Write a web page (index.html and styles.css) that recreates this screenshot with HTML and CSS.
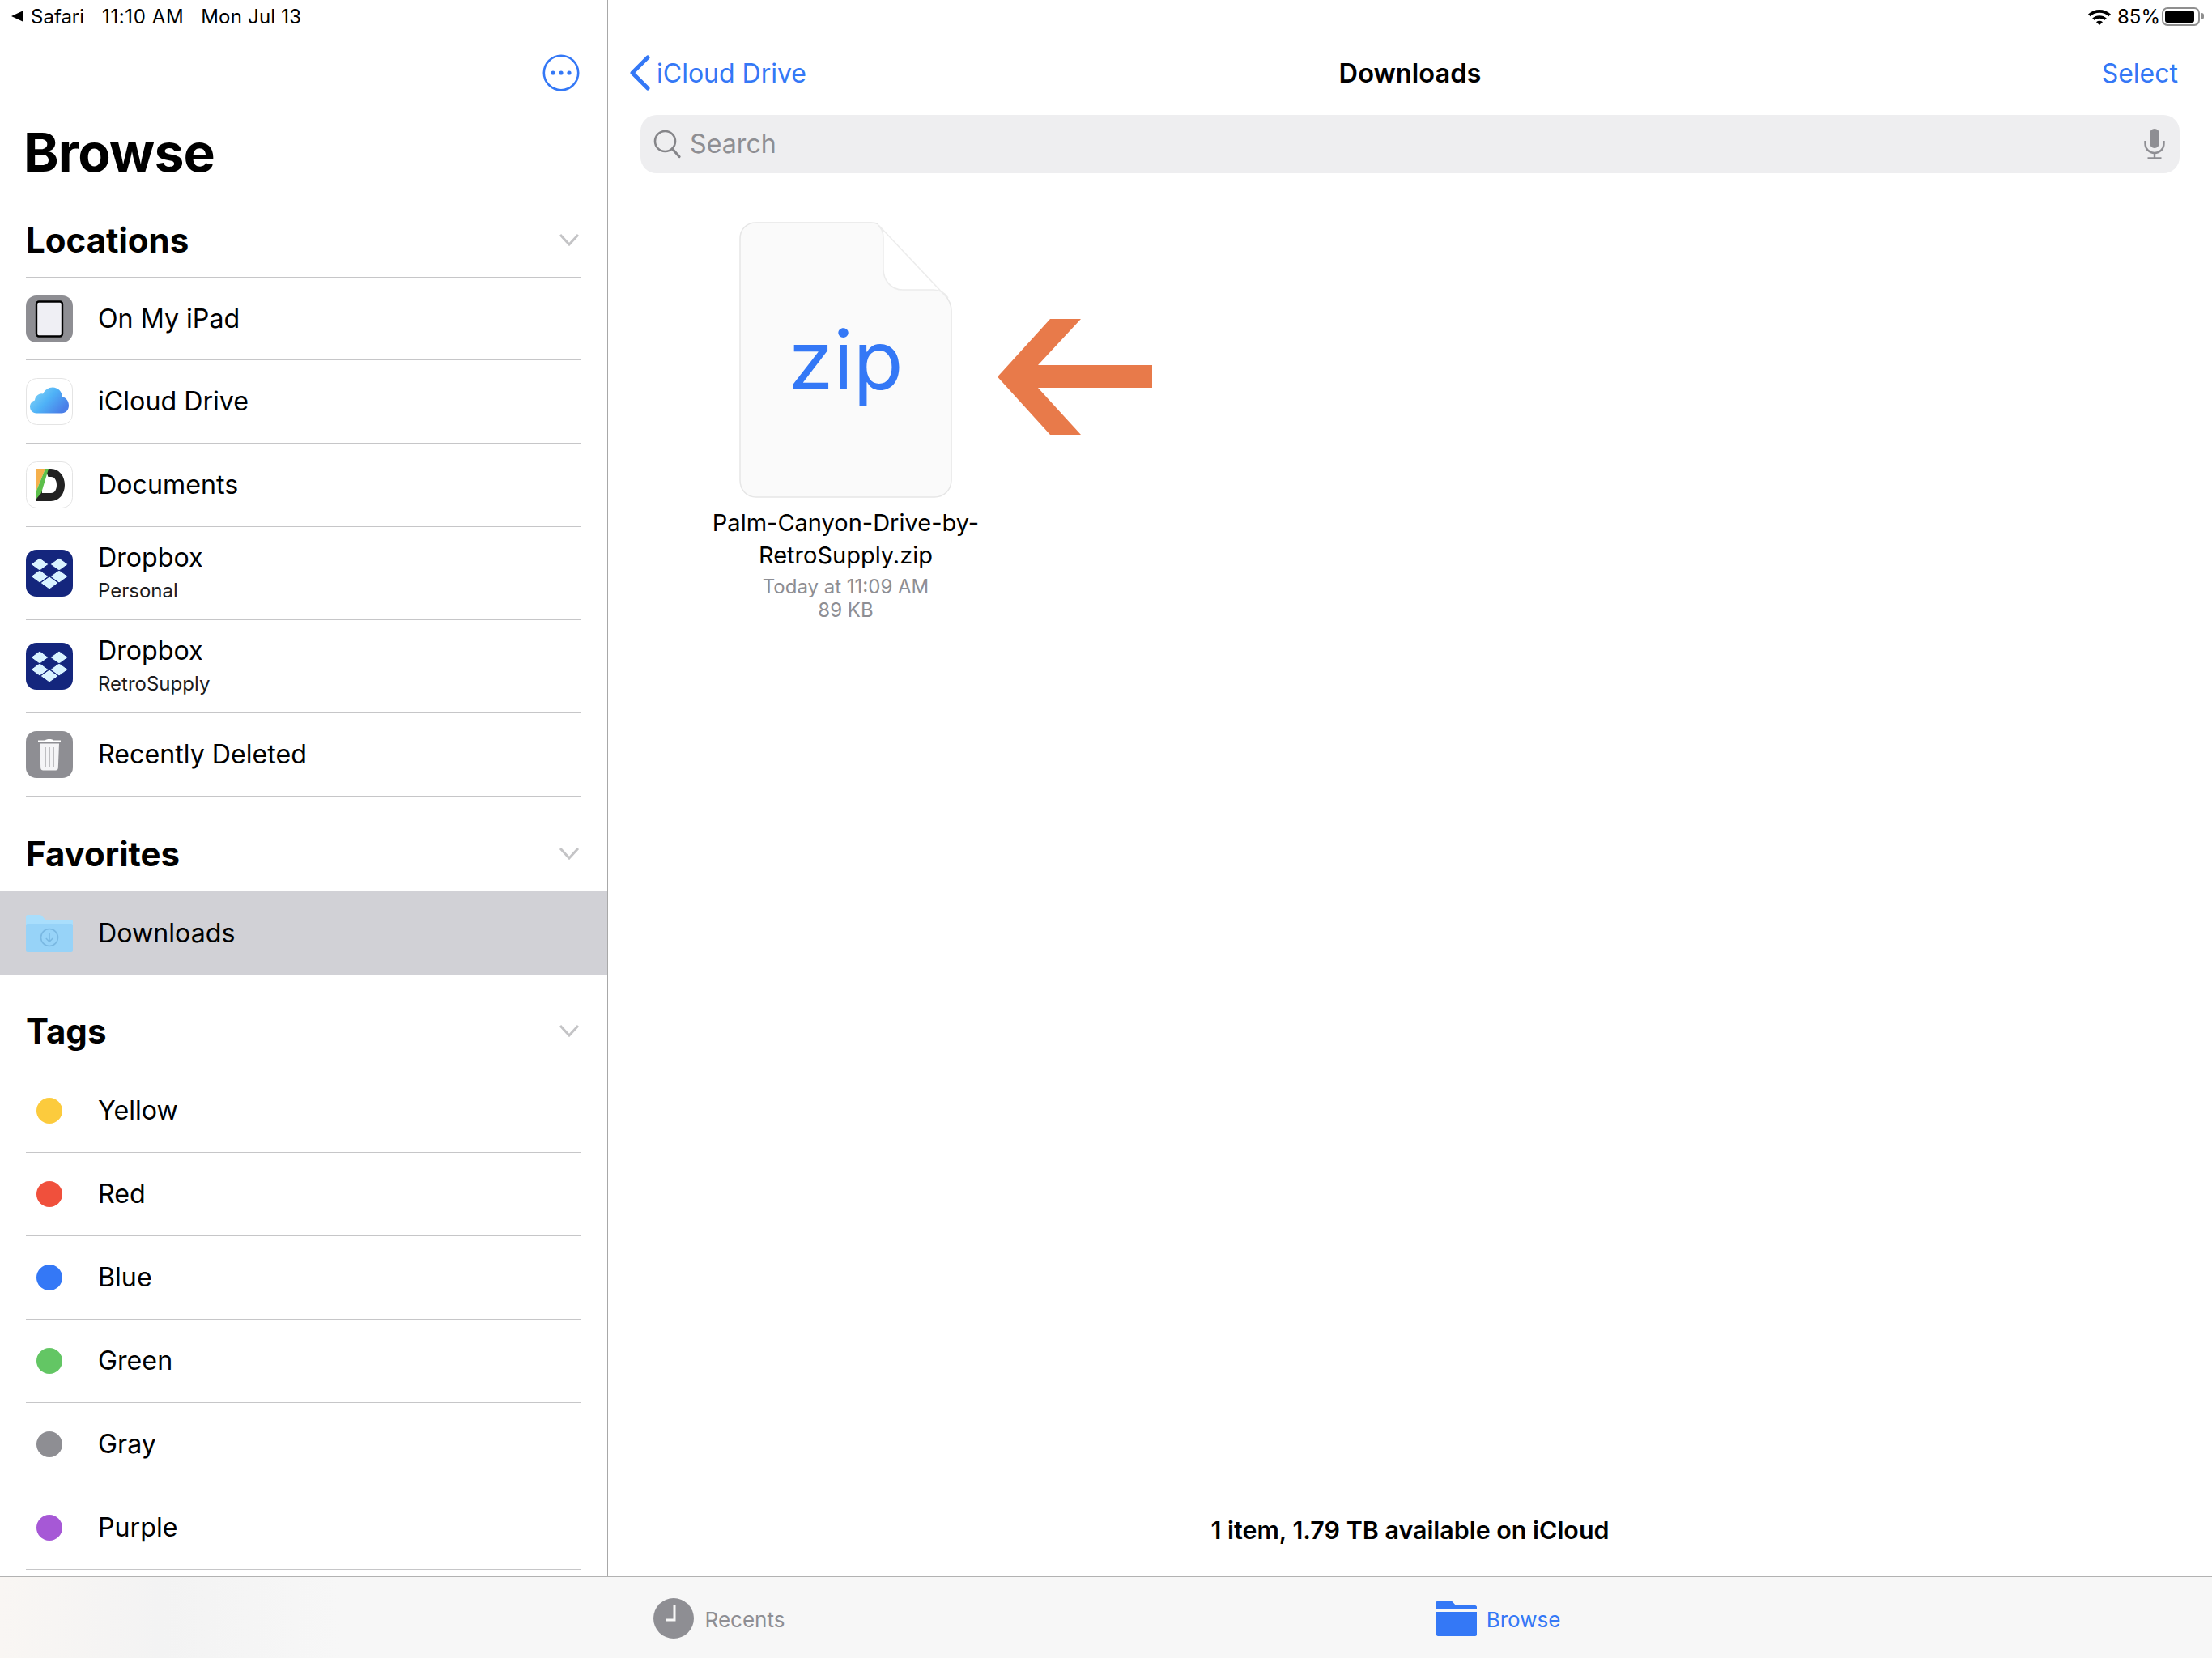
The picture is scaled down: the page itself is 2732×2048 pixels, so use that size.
FILE: index.html
```html
<!DOCTYPE html>
<html lang="en">
<head>
  <meta charset="UTF-8" />
  <title>Downloads</title>
  <link rel="stylesheet" href="styles.css">
</head>
<body>

  <div class="app">
    <div class="panes">

      <div class="sidebar">
        <div class="status-bar">
          <svg class="back-tri" width="16" height="14" viewBox="0 0 16 14"><path d="M15 0v14L0 7z" fill="#000"/></svg>
          <span class="status-app">Safari</span>
          <span class="status-time">11:10 AM</span>
          <span class="status-date">Mon Jul 13</span>
        </div>

        <div class="more-row">
          <svg width="46" height="46" viewBox="0 0 46 46">
            <circle cx="23" cy="23" r="21.2" fill="none" stroke="#3478f6" stroke-width="2.6"/>
            <circle cx="13" cy="23" r="2.6" fill="#3478f6"/>
            <circle cx="23" cy="23" r="2.6" fill="#3478f6"/>
            <circle cx="33" cy="23" r="2.6" fill="#3478f6"/>
          </svg>
        </div>

        <h1 class="browse-title">Browse</h1>

        <div class="section-head section-first">
          <h2>Locations</h2>
          <svg class="chev" width="26" height="16" viewBox="0 0 26 16"><path d="M2 2l11 12L24 2" fill="none" stroke="#c4c4c6" stroke-width="3"/></svg>
        </div>

        <div class="row">
          <div class="row-inner">
            <svg class="icon" width="58" height="58" viewBox="0 0 58 58">
              <rect width="58" height="58" rx="13" fill="#8e8e93"/>
              <rect x="13" y="7.5" width="32" height="43" rx="3" fill="#efeff4" stroke="#000" stroke-width="2.4"/>
            </svg>
            <div class="label">On My iPad</div>
          </div>
        </div>

        <div class="row">
          <div class="row-inner">
            <svg class="icon" width="58" height="58" viewBox="0 0 58 58">
              <defs>
                <linearGradient id="cloud" x1="0" y1="0" x2="1" y2="0.6">
                  <stop offset="0" stop-color="#8fdcf6"/>
                  <stop offset="0.55" stop-color="#4fb2f7"/>
                  <stop offset="1" stop-color="#4a7fe8"/>
                </linearGradient>
              </defs>
              <rect x="0.5" y="0.5" width="57" height="57" rx="13" fill="#fff" stroke="#e4e4e4"/>
              <path d="M13 43.500C8.500 43.500 5 40 5 35.500C5 31.500 7.500 28.500 11 27.500C11.500 22 16.500 18 21 19.500C23.500 14.500 28 11.500 33 11.500C39.500 11.500 44.500 16.500 45 23C49.800 24.500 53 28.500 53 34C53 39.500 49 43.500 44 43.500Z" fill="url(#cloud)"/>
            </svg>
            <div class="label">iCloud Drive</div>
          </div>
        </div>

        <div class="row">
          <div class="row-inner">
            <svg class="icon" width="58" height="58" viewBox="0 0 58 58">
              <rect x="0.5" y="0.5" width="57" height="57" rx="13" fill="#fff" stroke="#e4e4e4"/>
              <path d="M24 9H31C41 9 48 18 48 29C48 40 41 49 31 49H13V46L20 39H31C36 39 38 34 38 29C38 24 36 19 31 19H27.500Z" fill="#222"/>
              <path d="M13 49V46L20 32V39H31V49Z" fill="#222"/>
              <path d="M13 9H24L13 36Z" fill="#f5b04c"/>
              <path d="M24 9H28L19 39L13 46V36Z" fill="#5cbf4a"/>
            </svg>
            <div class="label">Documents</div>
          </div>
        </div>

        <div class="row row-tall">
          <div class="row-inner">
            <svg class="icon" width="58" height="58" viewBox="0 0 58 58">
              <rect width="58" height="58" rx="13" fill="#14267d"/>
              <path d="M6 18L17 10L28 18L17 26ZM30 18L41 10L52 18L41 26ZM6 33L17 25L28 33L17 41ZM30 33L41 25L52 33L41 41ZM18 41L29 33L40 41L29 49Z" fill="#d9f3ff" stroke="#14267d" stroke-width="1"/>
            </svg>
            <div class="label-stack">
              <div class="label">Dropbox</div>
              <div class="sublabel">Personal</div>
            </div>
          </div>
        </div>

        <div class="row row-tall">
          <div class="row-inner">
            <svg class="icon" width="58" height="58" viewBox="0 0 58 58">
              <rect width="58" height="58" rx="13" fill="#14267d"/>
              <path d="M6 18L17 10L28 18L17 26ZM30 18L41 10L52 18L41 26ZM6 33L17 25L28 33L17 41ZM30 33L41 25L52 33L41 41ZM18 41L29 33L40 41L29 49Z" fill="#d9f3ff" stroke="#14267d" stroke-width="1"/>
            </svg>
            <div class="label-stack">
              <div class="label">Dropbox</div>
              <div class="sublabel">RetroSupply</div>
            </div>
          </div>
        </div>

        <div class="row">
          <div class="row-inner">
            <svg class="icon" width="58" height="58" viewBox="0 0 58 58">
              <rect width="58" height="58" rx="13" fill="#8e8e93"/>
              <path d="M15 11.500H24C24.500 9.500 33.500 9.500 34 11.500H43V14H15Z" fill="#fff"/>
              <path d="M17 15.500H41L39.800 45.500C39.700 47.500 38.500 48.500 36.800 48.500H21.200C19.500 48.500 18.300 47.500 18.200 45.500Z" fill="#f4f4f6"/>
              <path d="M24 20V44M29 20V44M34 20V44" stroke="#9a9a9f" stroke-width="1.2"/>
            </svg>
            <div class="label">Recently Deleted</div>
          </div>
        </div>

        <div class="section-head">
          <h2>Favorites</h2>
          <svg class="chev" width="26" height="16" viewBox="0 0 26 16"><path d="M2 2l11 12L24 2" fill="none" stroke="#c4c4c6" stroke-width="3"/></svg>
        </div>

        <div class="row row-selected">
          <div class="row-inner">
            <svg class="icon" width="58" height="46" viewBox="0 0 58 46">
              <path d="M0 2C0 1 1 0 2 0H17C18.500 0 19.500 .8 20.500 2L24 6H56C57 6 58 7 58 8V15H0Z" fill="#a9defc"/>
              <path d="M0 13C0 12 1 11 2 11H56C57 11 58 12 58 13V44C58 45 57 46 56 46H2C1 46 0 45 0 44Z" fill="#97d3f8"/>
              <circle cx="29" cy="28" r="10.500" fill="none" stroke="#7ab8e2" stroke-width="1.600"/>
              <path d="M29 22V33M24.800 29L29 33.200L33.200 29" fill="none" stroke="#7ab8e2" stroke-width="1.600"/>
            </svg>
            <div class="label">Downloads</div>
          </div>
        </div>

        <div class="section-head">
          <h2>Tags</h2>
          <svg class="chev" width="26" height="16" viewBox="0 0 26 16"><path d="M2 2l11 12L24 2" fill="none" stroke="#c4c4c6" stroke-width="3"/></svg>
        </div>

        <div class="row"><div class="row-inner"><span class="tag-dot tag-yellow"></span><div class="label">Yellow</div></div></div>
        <div class="row"><div class="row-inner"><span class="tag-dot tag-red"></span><div class="label">Red</div></div></div>
        <div class="row"><div class="row-inner"><span class="tag-dot tag-blue"></span><div class="label">Blue</div></div></div>
        <div class="row"><div class="row-inner"><span class="tag-dot tag-green"></span><div class="label">Green</div></div></div>
        <div class="row"><div class="row-inner"><span class="tag-dot tag-gray"></span><div class="label">Gray</div></div></div>
        <div class="row"><div class="row-inner"><span class="tag-dot tag-purple"></span><div class="label">Purple</div></div></div>
      </div>

      <div class="detail">
        <div class="status-bar status-right">
          <svg width="30" height="22" viewBox="0 0 30 22">
            <path d="M1 8.500C8.500 1 21.500 1 29 8.500L26.300 11.200C20.300 5.400 9.700 5.400 3.700 11.200Z" fill="#000"/>
            <path d="M6.200 13.500C11 9 19 9 23.800 13.500L21.200 16.100C17.800 13.100 12.200 13.100 8.800 16.100Z" fill="#000"/>
            <path d="M11 18.200C13.400 16.300 16.600 16.300 19 18.200L15 22Z" fill="#000"/>
          </svg>
          <span class="battery-pct">85%</span>
          <div class="battery">
            <div class="battery-fill"></div>
          </div>
          <span class="battery-nub"></span>
        </div>

        <div class="nav-bar">
          <div class="nav-back">
            <svg width="26" height="44" viewBox="0 0 26 44"><path d="M23 3L4 22L23 41" fill="none" stroke="#3478f6" stroke-width="5" stroke-linecap="round" stroke-linejoin="round"/></svg>
            <span>iCloud Drive</span>
          </div>
          <div class="nav-title">Downloads</div>
          <div class="nav-select">Select</div>
        </div>

        <div class="search-wrap">
          <div class="search-box">
            <svg width="34" height="36" viewBox="0 0 34 36">
              <circle cx="14.500" cy="14.500" r="12.500" fill="none" stroke="#858589" stroke-width="2.600"/>
              <path d="M23.500 24L32 33.500" stroke="#858589" stroke-width="3.200" stroke-linecap="round"/>
            </svg>
            <span class="search-text">Search</span>
            <svg class="mic" width="26" height="38" viewBox="0 0 26 38">
              <rect x="7" y="0" width="12" height="24" rx="6" fill="#8e8e93"/>
              <path d="M1.500 15V18.500C1.500 25 6.500 30 13 30C19.500 30 24.500 25 24.500 18.500V15" fill="none" stroke="#8e8e93" stroke-width="2.400"/>
              <path d="M13 30V36M4.500 36.500H21.500" stroke="#8e8e93" stroke-width="2.400"/>
            </svg>
          </div>
        </div>

        <div class="files">
          <div class="file-item">
            <div class="file-icon">
              <svg class="file-shape" width="263" height="341" viewBox="0 0 263 341">
                <path d="M21 1H163C170 1 175 3 180 9L254 90C259 96 262 102 262 110V319C262 331 253 340 241 340H21C9 340 1 331 1 319V21C1 9 9 1 21 1Z" fill="#fafafa" stroke="#e6e6e6" stroke-width="1.500"/>
                <path d="M172 4C177 8 178 14 178 20V58C178 73 188 84 202 84H240C248 84 254 88 258 94L262 80V0H172Z" fill="#fff"/>
                <path d="M172 5C177 9 178 14 178 20V58C178 73 188 84 202 84H240C248 84 254 88 258 94" fill="none" stroke="#ececec" stroke-width="1.500"/>
                <path d="M172 4L256 93" fill="none" stroke="#ececec" stroke-width="1.500"/>
              </svg>
              <span class="file-ext">zip</span>
            </div>
            <div class="file-name">Palm-Canyon-Drive-by-<br>RetroSupply.zip</div>
            <div class="file-meta">Today at 11:09 AM<br>89 KB</div>
          </div>

          <svg class="arrow" width="191" height="143" viewBox="0 0 191 143">
            <path d="M0 71.500L65 0H103L50 57H191V85H50L103 143H65Z" fill="#e87a4a"/>
          </svg>
        </div>

        <div class="detail-footer">1 item, 1.79 TB available on iCloud</div>
      </div>

    </div>

    <div class="tab-bar">
      <div class="tab">
        <svg width="50" height="50" viewBox="0 0 50 50">
          <circle cx="25" cy="25" r="25" fill="#8e8e93"/>
          <path d="M26 9V27H15" fill="none" stroke="#f7f7f7" stroke-width="3"/>
        </svg>
        <span class="tab-label">Recents</span>
      </div>
      <div class="tab tab-active">
        <svg width="50" height="44" viewBox="0 0 50 44">
          <path d="M0 2C0 1 1 0 2 0H17C18 0 19 .5 20 1.500L24 6H48C49 6 50 7 50 8V10.500H0Z" fill="#3478f6"/>
          <path d="M0 14H50V42C50 43 49 44 48 44H2C1 44 0 43 0 42Z" fill="#3478f6"/>
        </svg>
        <span class="tab-label">Browse</span>
      </div>
    </div>
  </div>

</body>
</html>
```

FILE: styles.css
```css
* {
  box-sizing: border-box;
}

body {
  margin: 0;
  font-family: 'Inter', sans-serif;
  background-color: #fff;
  color: #000;
}

.app {
  width: 2732px;
  height: 2048px;
  display: flex;
  flex-direction: column;
  overflow: hidden;
}

.panes {
  display: flex;
  height: 1947px;
}

/* status bar */

.status-bar {
  height: 40px;
  display: flex;
  align-items: center;
  font-size: 24px;
  font-weight: 400;
}

.back-tri {
  margin-left: 14px;
  margin-right: 8px;
}

.status-time {
  margin-left: 22px;
  letter-spacing: 0.6px;
}

.status-date {
  margin-left: 21px;
  letter-spacing: 0.2px;
}

.status-right {
  justify-content: flex-end;
  padding-right: 10px;
}

.battery-pct {
  margin-left: 7px;
  margin-right: 2px;
}

.battery {
  width: 47px;
  height: 23px;
  border: 2px solid #8f8f8f;
  border-radius: 7px;
  padding: 2px;
}

.battery-fill {
  width: 36px;
  height: 15px;
  background: #000;
  border-radius: 3px;
}

.battery-nub {
  width: 3px;
  height: 8px;
  margin-left: 2px;
  background: #8f8f8f;
  border-radius: 0 3px 3px 0;
}

/* sidebar */

.sidebar {
  width: 751px;
  flex-shrink: 0;
  border-right: 1px solid #a8a8a8;
  overflow: hidden;
}

.more-row {
  display: flex;
  justify-content: flex-end;
  padding: 27px 34px 0 0;
  height: 107px;
}

.browse-title {
  margin: 0;
  padding-left: 29px;
  font-size: 66px;
  font-weight: 700;
  letter-spacing: -0.8px;
  line-height: 82px;
  height: 82px;
}

.section-head {
  height: 117px;
  margin: 0 33px 0 32px;
  padding-bottom: 26px;
  display: flex;
  align-items: flex-end;
  justify-content: space-between;
}

.section-first {
  height: 114px;
  border-bottom: 1px solid #c6c6c8;
  padding-bottom: 25px;
}

.section-head h2 {
  margin: 0;
  font-size: 42px;
  font-weight: 700;
  line-height: 40px;
  flex: 1;
}

.chev {
  margin-bottom: 13px;
  margin-right: 1px;
}

.section-head:has(+ .row:not(.row-selected)) {
  border-bottom: 1px solid #c6c6c8;
}

.row {
  padding: 0 33px 0 32px;
}

.row-inner {
  height: 103px;
  display: flex;
  align-items: center;
  border-bottom: 1px solid #c6c6c8;
}

.section-first + .row .row-inner {
  height: 102px;
}

.row-tall .row-inner {
  height: 115px;
}

.row-selected {
  background-color: #d1d1d6;
}

.row-selected .row-inner {
  border-bottom: none;
}

.icon {
  flex-shrink: 0;
  margin-right: 31px;
}

.label {
  font-size: 32.2px;
  line-height: 40px;
}

.label-stack {
  margin-top: -2px;
}

.sublabel {
  font-size: 24px;
  line-height: 30px;
  margin-top: 6px;
  color: #1c1c1e;
}

.tag-dot {
  width: 32px;
  height: 32px;
  border-radius: 50%;
  margin: 0 44px 0 13px;
  flex-shrink: 0;
}

.tag-yellow { background-color: #fccb3d; }
.tag-red { background-color: #f0503c; }
.tag-blue { background-color: #3478f6; }
.tag-green { background-color: #63c664; }
.tag-gray { background-color: #8e8e93; }
.tag-purple { background-color: #a658d6; }

/* detail pane */

.detail {
  flex: 1;
  display: flex;
  flex-direction: column;
  min-width: 0;
}

.nav-bar {
  height: 100px;
  padding: 0 42px;
  display: grid;
  grid-template-columns: 1fr auto 1fr;
  align-items: center;
  font-size: 32px;
}

.nav-back {
  display: flex;
  align-items: center;
  gap: 8px;
  margin-left: -16px;
  color: #3478f6;
}

.nav-title {
  font-size: 32.6px;
  font-weight: 600;
}

.nav-select {
  text-align: right;
  color: #3478f6;
}

.search-wrap {
  padding: 2px 40px 30px;
  border-bottom: 1px solid #b2b2b2;
}

.search-box {
  height: 72px;
  background-color: #eeeef0;
  border-radius: 20px;
  display: flex;
  align-items: center;
  padding: 0 18px 0 16px;
}

.search-text {
  margin-left: 11px;
  flex: 1;
  font-size: 32.2px;
  margin-top: -2px;
  color: #8e8e93;
}

.files {
  position: relative;
  flex: 1;
  padding: 29px 0 0 128px;
}

.file-item {
  width: 331px;
  display: flex;
  flex-direction: column;
  align-items: center;
}

.file-icon {
  position: relative;
  width: 263px;
  height: 341px;
}

.file-shape {
  display: block;
}

.file-ext {
  position: absolute;
  left: 0;
  right: 0;
  top: 110px;
  text-align: center;
  font-size: 101px;
  line-height: 120px;
  font-weight: 400;
  color: #3478f6;
}

.file-name {
  margin-top: 11px;
  font-size: 29px;
  line-height: 40px;
  text-align: center;
  white-space: nowrap;
}

.file-meta {
  margin-top: 4px;
  font-size: 24px;
  line-height: 29px;
  text-align: center;
  color: #8e8e93;
}

.arrow {
  position: absolute;
  left: 481px;
  top: 149px;
}

.detail-footer {
  height: 77px;
  text-align: center;
  font-size: 30.4px;
  font-weight: 600;
  line-height: 40px;
}

/* tab bar */

.tab-bar {
  height: 101px;
  display: grid;
  grid-template-columns: 960px 960px;
  padding-left: 408px;
  padding-top: 2px;
  border-top: 1px solid #b2b2b2;
  background: linear-gradient(90deg, #f9f6f3 0, #f3f3f3 200px, #f7f7f7 420px);
}

.tab {
  display: flex;
  align-items: center;
  justify-content: center;
  gap: 14px;
  font-size: 26px;
  color: #8e8e93;
}

.tab-label {
  margin-top: 2px;
}

.tab-active {
  gap: 12px;
  padding-left: 5px;
  color: #3478f6;
}
```
